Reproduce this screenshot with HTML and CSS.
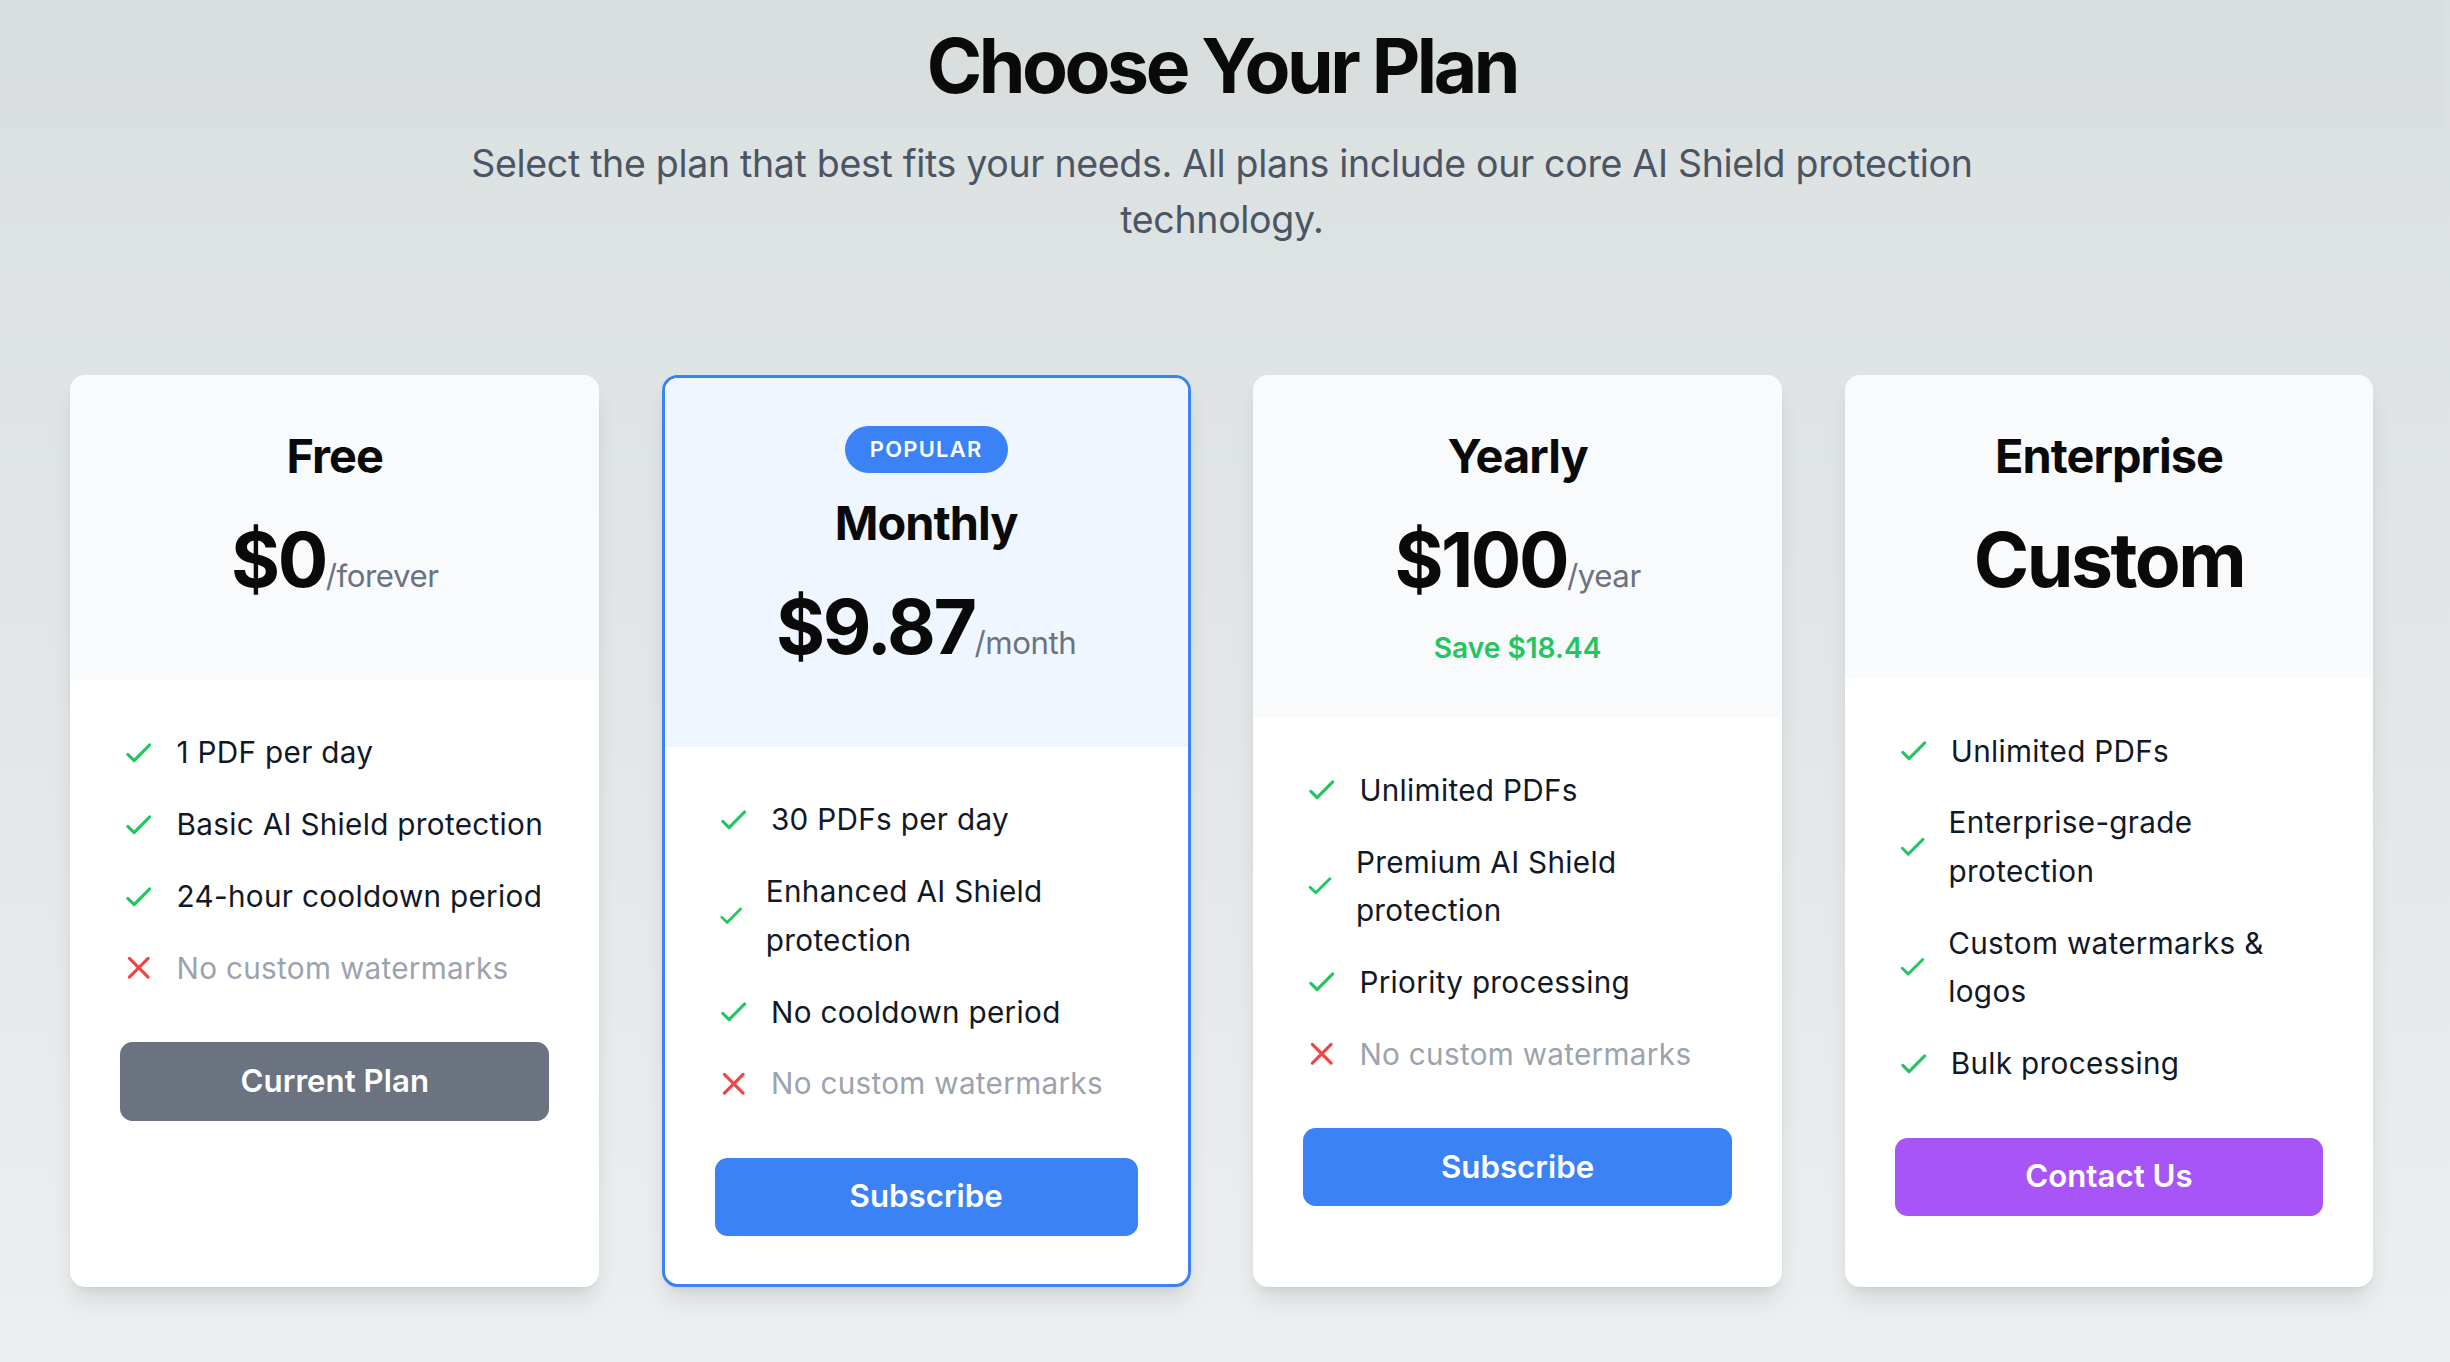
FILE: index.html
```html
<!DOCTYPE html>
<html lang="en">
<head>
<meta charset="utf-8">
<title>Choose Your Plan</title>
<link rel="stylesheet" href="styles.css">
</head>
<body>
<main class="page">
  <h1 class="title">Choose Your Plan</h1>
  <p class="subtitle">Select the plan that best fits your needs. All plans include our core AI Shield protection technology.</p>

  <section class="plans">
    <article class="card">
      <div class="card-head">
        <h2 class="plan-name">Free</h2>
        <div class="price"><span class="amount">$0</span><span class="period">/forever</span></div>
      </div>
      <div class="card-body">
        <ul class="features">
          <li><svg class="icon ok" viewBox="0 0 24 24"><path d="M5 13l4 4L19 7"/></svg><span>1 PDF per day</span></li>
          <li><svg class="icon ok" viewBox="0 0 24 24"><path d="M5 13l4 4L19 7"/></svg><span>Basic AI Shield protection</span></li>
          <li><svg class="icon ok" viewBox="0 0 24 24"><path d="M5 13l4 4L19 7"/></svg><span>24-hour cooldown period</span></li>
          <li class="off"><svg class="icon no" viewBox="0 0 24 24"><path d="M6 18L18 6M6 6l12 12"/></svg><span>No custom watermarks</span></li>
        </ul>
        <button class="btn btn-gray">Current Plan</button>
      </div>
    </article>

    <article class="card popular">
      <div class="card-head">
        <span class="badge">POPULAR</span>
        <h2 class="plan-name">Monthly</h2>
        <div class="price"><span class="amount">$9.87</span><span class="period">/month</span></div>
      </div>
      <div class="card-body">
        <ul class="features">
          <li><svg class="icon ok" viewBox="0 0 24 24"><path d="M5 13l4 4L19 7"/></svg><span>30 PDFs per day</span></li>
          <li><svg class="icon ok" viewBox="0 0 24 24"><path d="M5 13l4 4L19 7"/></svg><span>Enhanced AI Shield protection</span></li>
          <li><svg class="icon ok" viewBox="0 0 24 24"><path d="M5 13l4 4L19 7"/></svg><span>No cooldown period</span></li>
          <li class="off"><svg class="icon no" viewBox="0 0 24 24"><path d="M6 18L18 6M6 6l12 12"/></svg><span>No custom watermarks</span></li>
        </ul>
        <button class="btn btn-blue">Subscribe</button>
      </div>
    </article>

    <article class="card">
      <div class="card-head">
        <h2 class="plan-name">Yearly</h2>
        <div class="price"><span class="amount">$100</span><span class="period">/year</span></div>
        <p class="save">Save $18.44</p>
      </div>
      <div class="card-body">
        <ul class="features">
          <li><svg class="icon ok" viewBox="0 0 24 24"><path d="M5 13l4 4L19 7"/></svg><span>Unlimited PDFs</span></li>
          <li><svg class="icon ok" viewBox="0 0 24 24"><path d="M5 13l4 4L19 7"/></svg><span>Premium AI Shield protection</span></li>
          <li><svg class="icon ok" viewBox="0 0 24 24"><path d="M5 13l4 4L19 7"/></svg><span>Priority processing</span></li>
          <li class="off"><svg class="icon no" viewBox="0 0 24 24"><path d="M6 18L18 6M6 6l12 12"/></svg><span>No custom watermarks</span></li>
        </ul>
        <button class="btn btn-blue">Subscribe</button>
      </div>
    </article>

    <article class="card">
      <div class="card-head">
        <h2 class="plan-name">Enterprise</h2>
        <div class="price"><span class="amount">Custom</span></div>
      </div>
      <div class="card-body">
        <ul class="features">
          <li><svg class="icon ok" viewBox="0 0 24 24"><path d="M5 13l4 4L19 7"/></svg><span>Unlimited PDFs</span></li>
          <li><svg class="icon ok" viewBox="0 0 24 24"><path d="M5 13l4 4L19 7"/></svg><span>Enterprise-grade protection</span></li>
          <li><svg class="icon ok" viewBox="0 0 24 24"><path d="M5 13l4 4L19 7"/></svg><span>Custom watermarks &amp; logos</span></li>
          <li><svg class="icon ok" viewBox="0 0 24 24"><path d="M5 13l4 4L19 7"/></svg><span>Bulk processing</span></li>
        </ul>
        <button class="btn btn-purple">Contact Us</button>
      </div>
    </article>
  </section>
</main>
</body>
</html>
```

FILE: styles.css
```css
html {
  zoom: 1.5625;
  background: #eceeef;
}

body {
  margin: 0;
  padding-right: 4px;
  background: linear-gradient(180deg, #dbe0e0 0%, #e2e6e7 50%, #eceff0 100%);
  font-family: Inter, "Noto Sans", "Liberation Sans", sans-serif;
  color: #111827;
}

.page {
  padding-bottom: 45px;
}

.title {
  margin: 0;
  padding: 18px 0 16px;
  font-size: 48px;
  line-height: 48px;
  font-weight: 700;
  letter-spacing: -2.2px;
  text-align: center;
  color: #0a0a0a;
  background: rgba(0, 0, 0, 0.012);
}

.subtitle {
  max-width: 1000px;
  margin: 5px auto 0;
  font-size: 24px;
  line-height: 36px;
  letter-spacing: -0.2px;
  text-align: center;
  color: #4b5563;
}

.plans {
  display: grid;
  grid-template-columns: repeat(4, 1fr);
  gap: 40px;
  margin: 81px 45px 0;
}

.card {
  display: flex;
  flex-direction: column;
  background: #ffffff;
  border-radius: 10px;
  overflow: hidden;
  box-shadow: 0 10px 15px -3px rgba(0, 0, 0, 0.1), 0 4px 6px -4px rgba(0, 0, 0, 0.1);
}

.card.popular {
  border: 2px solid #3b82f6;
}

.card-head {
  padding: 34px 32px 32px;
  text-align: center;
  background: #f8fafc;
}

.popular .card-head {
  padding-top: 31px;
  background: #eff6ff;
}

.badge {
  display: block;
  width: fit-content;
  margin: 0 auto 14px;
  padding: 5px 16px;
  border-radius: 9999px;
  background: #3b82f6;
  color: #ffffff;
  font-size: 14px;
  line-height: 20px;
  font-weight: 600;
  letter-spacing: 0.06em;
}

.plan-name {
  margin: 0 0 24px;
  font-size: 30px;
  line-height: 36px;
  font-weight: 700;
  letter-spacing: -0.6px;
  color: #0a0a0a;
}

.price {
  display: flex;
  justify-content: center;
  align-items: baseline;
  margin-bottom: 20px;
}

.amount {
  font-size: 48px;
  line-height: 48px;
  font-weight: 700;
  letter-spacing: -1.6px;
  color: #0a0a0a;
}

.period {
  font-size: 20px;
  line-height: 28px;
  letter-spacing: -0.3px;
  color: #6b7280;
}

.save {
  margin: 2px 0 0;
  font-size: 18px;
  line-height: 24px;
  font-weight: 600;
  color: #22c55e;
}

.card-body {
  flex: 1;
  display: flex;
  flex-direction: column;
  padding: 31px 32px;
}

.features {
  list-style: none;
  margin: 0;
  padding: 0;
  display: flex;
  flex-direction: column;
  gap: 15px;
}

.features li {
  display: flex;
  align-items: center;
  font-size: 19px;
  line-height: 31px;
  letter-spacing: 0.2px;
  color: #111827;
}

.features li.off {
  color: #9ca3af;
}

.icon {
  width: 24px;
  height: 24px;
  min-width: 0;
  flex-shrink: 1;
  margin-right: 12px;
  fill: none;
  stroke-width: 2;
  stroke-linecap: round;
  stroke-linejoin: round;
}

.icon.ok {
  stroke: #22c55e;
}

.icon.no {
  stroke: #ef4444;
}

.btn {
  display: block;
  width: 100%;
  margin-top: 32px;
  padding: 11px 16px;
  border: none;
  border-radius: 8px;
  font-family: inherit;
  font-size: 20px;
  line-height: 28px;
  font-weight: 600;
  color: #ffffff;
  cursor: pointer;
}

.btn-gray {
  background: #6b7280;
}

.btn-blue {
  background: #3b82f6;
}

.btn-purple {
  background: #a855f7;
}
```
